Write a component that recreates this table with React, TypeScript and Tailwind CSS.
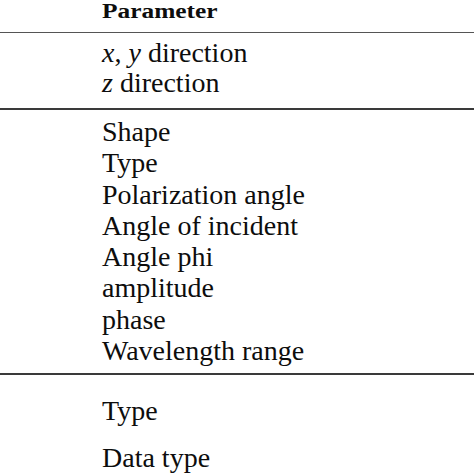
import React from "react";

const serif = { fontFamily: '"Liberation Serif", "Times New Roman", serif' };

function Row({ children }: { children: React.ReactNode }) {
  return <div className="whitespace-nowrap">{children}</div>;
}

export default function App() {
  return (
    <div
      className="w-[474px] h-[474px] overflow-hidden bg-white text-[#0d0d0d]"
      style={serif}
    >
      <div className="h-[32px] pl-[102px] text-[20px] leading-[22px] font-bold">
        <span className="inline-block origin-left scale-x-[1.27]">Parameter</span>
      </div>
      <div className="h-px bg-[#555555]" />
      <div className="pl-[102px] pt-[5px] pb-[10px] text-[28px] leading-[30px]">
        <Row>
          <i>x</i>, <i>y</i> direction
        </Row>
        <Row>
          <i>z</i> direction
        </Row>
      </div>
      <div className="h-[2px] bg-[#3a3a3a]" />
      <div className="pl-[102px] pt-[6px] pb-[7px] text-[28px] leading-[31.3px]">
        <Row>Shape</Row>
        <Row>Type</Row>
        <Row>Polarization angle</Row>
        <Row>Angle of incident</Row>
        <Row>Angle phi</Row>
        <Row>amplitude</Row>
        <Row>phase</Row>
        <Row>Wavelength range</Row>
      </div>
      <div className="h-[2px] bg-[#3a3a3a]" />
      <div className="pl-[102px] pt-[20px] flex flex-col gap-[15px] text-[28px] leading-[31.3px]">
        <Row>Type</Row>
        <Row>Data type</Row>
      </div>
    </div>
  );
}
